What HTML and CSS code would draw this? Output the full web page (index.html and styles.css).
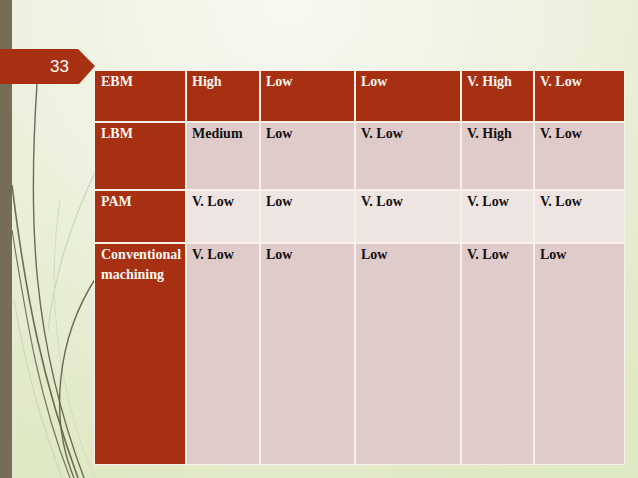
FILE: index.html
```html
<!DOCTYPE html>
<html lang="en">
<head>
<meta charset="utf-8">
<title>Slide 33</title>
<link rel="stylesheet" href="styles.css">
</head>
<body>
<svg class="deco" viewBox="0 0 638 478" width="638" height="478" aria-hidden="true">
  <path d="M95 172 C 72 222, 55 270, 48 330" fill="none" stroke="#cdd6b8" stroke-width="1.2"/>
  <path d="M14 300 C 28 380, 44 430, 62 478" fill="none" stroke="#cfd8ba" stroke-width="1.2"/>
  <path d="M60 200 C 45 300, 60 400, 95 478" fill="none" stroke="#d3dcc0" stroke-width="1"/>
  <path d="M37 84 C 28 220, 32 340, 84 478" fill="none" stroke="#6e6a52" stroke-width="1.4"/>
  <path d="M12 185 C 26 300, 44 385, 78 478" fill="none" stroke="#6e6a52" stroke-width="1.6"/>
  <path d="M12 230 C 28 330, 40 400, 70 478" fill="none" stroke="#7a765e" stroke-width="1.2"/>
  <path d="M97 276 C 55 340, 50 420, 74 478" fill="none" stroke="#6e6a52" stroke-width="1.4"/>
  <rect x="0" y="0" width="12" height="478" fill="#756d55"/>
  <polygon points="0,49 78,49 95,66 79,84 0,84" fill="#a63011"/>
</svg>
<div class="badge">33</div>
<main class="slide">
  <div class="table">
    <div class="cell head">EBM</div>
    <div class="cell head">High</div>
    <div class="cell head">Low</div>
    <div class="cell head">Low</div>
    <div class="cell head">V. High</div>
    <div class="cell head">V. Low</div>

    <div class="cell head">LBM</div>
    <div class="cell dark">Medium</div>
    <div class="cell dark">Low</div>
    <div class="cell dark">V. Low</div>
    <div class="cell dark">V. High</div>
    <div class="cell dark">V. Low</div>

    <div class="cell head">PAM</div>
    <div class="cell light">V. Low</div>
    <div class="cell light">Low</div>
    <div class="cell light">V. Low</div>
    <div class="cell light">V. Low</div>
    <div class="cell light">V. Low</div>

    <div class="cell head">Conventional machining</div>
    <div class="cell dark">V. Low</div>
    <div class="cell dark">Low</div>
    <div class="cell dark">Low</div>
    <div class="cell dark">V. Low</div>
    <div class="cell dark">Low</div>
  </div>
</main>
</body>
</html>
```

FILE: styles.css
```css
html, body {
  margin: 0;
  padding: 0;
}

body {
  width: 638px;
  height: 478px;
  overflow: hidden;
  position: relative;
  background: radial-gradient(ellipse 90% 110% at 45% 0%, #f8f9f1 0%, #eef2e0 45%, #e4ebcd 80%, #dfe8c4 100%);
}

.deco {
  position: absolute;
  left: 0;
  top: 0;
  z-index: 0;
}

.badge {
  position: absolute;
  left: 50px;
  top: 57px;
  z-index: 2;
  font-family: "Liberation Sans", Arial, sans-serif;
  font-size: 17px;
  line-height: 20px;
  color: #ffffff;
}

.slide {
  position: relative;
  z-index: 1;
  padding: 70px 0 0 94px;
}

.table {
  display: grid;
  grid-template-columns: 90px 72px 93px 104px 71px 89px;
  grid-template-rows: 50px 66px 51px 220px;
  gap: 2px;
  padding: 1px;
  width: max-content;
  background: #f7efe8;
}

.cell {
  font-family: "Liberation Serif", "Times New Roman", serif;
  font-weight: bold;
  font-size: 14px;
  line-height: 20px;
  padding: 1px 4px 0 5px;
  color: #141010;
}

.head {
  background: #a63011;
  color: #fdf6f0;
}

.table .head:nth-child(6n+1) {
  padding-left: 6px;
}

.dark {
  background: #dfcbca;
}

.light {
  background: #eee5e3;
}
```
